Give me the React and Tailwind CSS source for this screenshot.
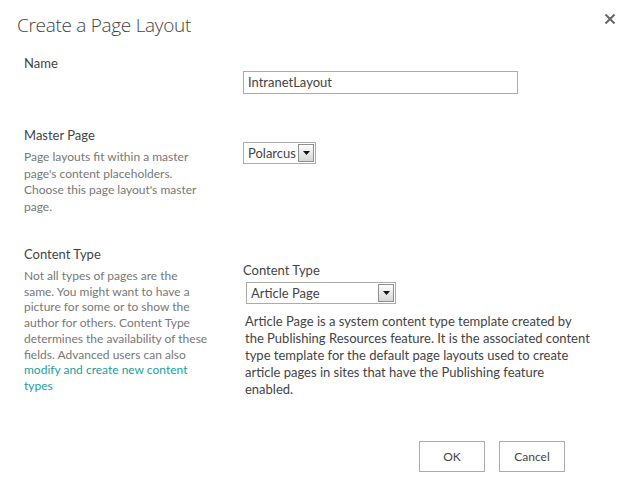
import React from "react";

function FakeSelect({ value, width }) {
  return (
    <div
      className={`flex h-[22px] items-stretch border border-[#ababab] bg-white ${width}`}
    >
      <span className="flex-1 whitespace-nowrap pl-[4px] text-[13px] leading-[20px] text-[#444]">
        {value}
      </span>
      <span className="m-px flex w-[16px] items-center justify-center border border-[#8f8f8f] bg-gradient-to-b from-[#fdfdfd] to-[#d6d6d6]">
        <svg width="7" height="4" viewBox="0 0 7 4">
          <path d="M0 0h7L3.5 4z" fill="#111" />
        </svg>
      </span>
    </div>
  );
}

export default function App() {
  return (
    <div className="relative h-[481px] w-[629px] bg-white font-['Lato',sans-serif] text-[#444]">
      <div className="flex items-start justify-between pl-[17px] pr-[13px] pt-[11px]">
        <h1 className="font-['Open_Sans',sans-serif] text-[19px] font-light leading-[28px] tracking-[-0.3px] text-[#444]">
          Create a Page Layout
        </h1>
        <button className="mt-[2px] p-0">
          <svg width="12" height="12" viewBox="0 0 12 12">
            <path
              d="M1.5 1.5l9 9M10.5 1.5l-9 9"
              stroke="#666"
              strokeWidth="2"
            />
          </svg>
        </button>
      </div>

      <div className="pl-[24px]">
        {/* Name */}
        <div className="mt-[16px] flex">
          <div className="w-[219px] text-[13px] leading-[17px]">Name</div>
          <div className="pt-[16px]">
            <div className="flex h-[23px] w-[275px] items-center border border-[#ababab] px-[4px] text-[13px] text-[#444]">
              IntranetLayout
            </div>
          </div>
        </div>

        {/* Master Page */}
        <div className="mt-[33px] flex">
          <div className="w-[219px]">
            <div className="text-[13px] leading-[17px]">Master Page</div>
            <p className="mt-[5px] whitespace-nowrap text-[12px] leading-[16.5px] text-[#777]">
              Page layouts fit within a master
              <br />
              page's content placeholders.
              <br />
              Choose this page layout's master
              <br />
              page.
            </p>
          </div>
          <div className="pt-[15px]">
            <FakeSelect value="Polarcus" width="w-[73px]" />
          </div>
        </div>

        {/* Content Type */}
        <div className="mt-[31px] flex">
          <div className="w-[219px]">
            <div className="text-[13px] leading-[17px]">Content Type</div>
            <p className="mt-[5px] whitespace-nowrap text-[12px] leading-[15.7px] text-[#777]">
              Not all types of pages are the
              <br />
              same. You might want to have a
              <br />
              picture for some or to show the
              <br />
              author for others. Content Type
              <br />
              determines the availability of these
              <br />
              fields. Advanced users can also
              <br />
              <a href="#" className="text-[#1ba19a]">
                modify and create new content
                <br />
                types
              </a>
            </p>
          </div>
          <div className="pt-[16px]">
            <div className="text-[13px] leading-[17px]">Content Type</div>
            <div className="ml-[3px] mt-[3px]">
              <FakeSelect value="Article Page" width="w-[150px]" />
            </div>
            <p className="ml-[2px] mt-[9px] whitespace-nowrap text-[13px] leading-[17px] text-[#444]">
              Article Page is a system content type template created by
              <br />
              the Publishing Resources feature. It is the associated content
              <br />
              type template for the default page layouts used to create
              <br />
              article pages in sites that have the Publishing feature
              <br />
              enabled.
            </p>
          </div>
        </div>
      </div>

      <div className="mt-[43px] flex justify-end gap-[14px] pr-[64px]">
        <button className="h-[31px] w-[66px] border border-[#ababab] bg-white text-[12px] text-[#444]">
          OK
        </button>
        <button className="h-[31px] w-[66px] border border-[#ababab] bg-white text-[12px] text-[#444]">
          Cancel
        </button>
      </div>
    </div>
  );
}
